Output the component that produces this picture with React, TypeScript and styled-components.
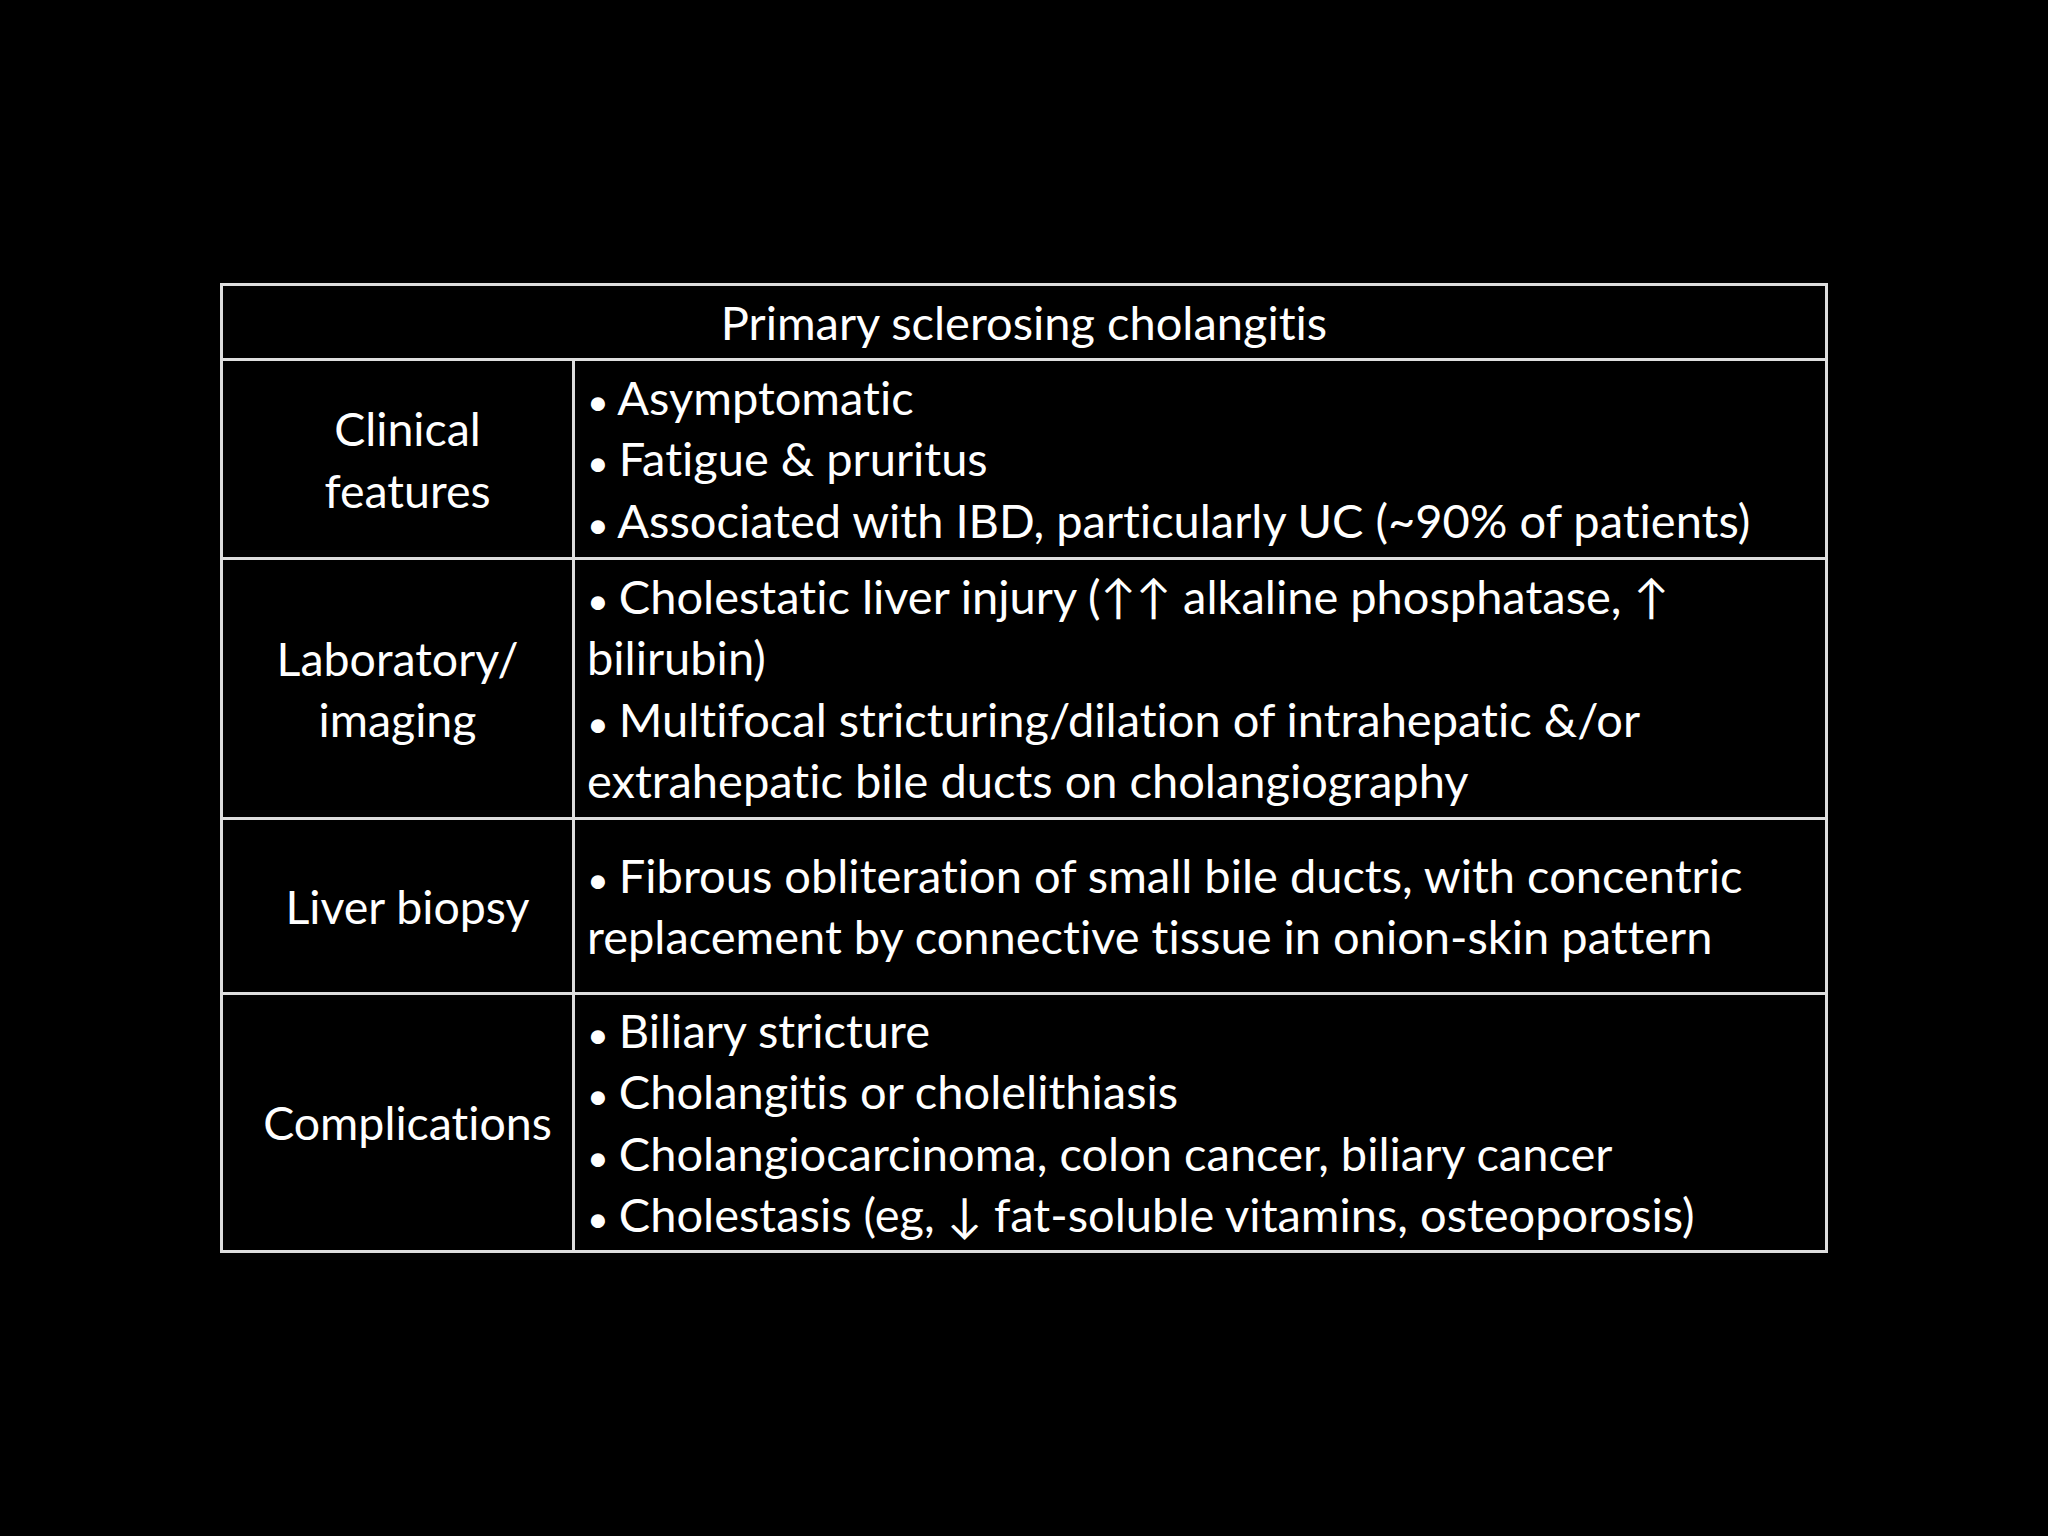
import React from 'react';
import styled, { createGlobalStyle } from 'styled-components';

const Global = createGlobalStyle`
  html, body { margin: 0; padding: 0; background: #000; }
  body {
    font-family: Lato, "Open Sans", sans-serif;
    color: #fff;
    font-variant-ligatures: none;
    font-feature-settings: "liga" 0, "clig" 0;
  }
`;

const Page = styled.div`
  width: 100vw;
  height: 100vh;
  display: grid;
  place-items: center;
  background: #000;
`;

const Table = styled.div`
  width: 1608px;
  display: grid;
  grid-template-columns: 349px 1250px;
  grid-template-rows: 72px 196px 257px 172px 255px;
  gap: 3px;
  padding: 3px;
  background: #dedede;
  box-sizing: border-box;
`;

const Header = styled.div`
  grid-column: 1 / 3;
  background: #000;
  display: flex;
  align-items: center;
  justify-content: center;
  font-size: 47px;
  line-height: 61px;
`;

const Label = styled.div<{ $shift?: number }>`
  background: #000;
  display: flex;
  flex-direction: column;
  align-items: center;
  justify-content: center;
  text-align: center;
  font-size: 46.5px;
  line-height: 61.4px;
  padding-left: ${p => (p.$shift ?? 0) * 2}px;
  padding-top: 1px;
`;

const Body = styled.div`
  background: #000;
  display: flex;
  flex-direction: column;
  justify-content: center;
  padding: 0 12px;
  font-size: 47px;
  line-height: 61.4px;
  white-space: nowrap;
`;

const Line = styled.div`
  height: 61.4px;
`;

const Bullet = styled.span`
  font-size: 0.8em;
  line-height: 0;
  margin-right: -2px;
`;

type Row = { label: string[]; shift?: number; lines: string[] };

const rows: Row[] = [
  {
    label: ['Clinical', 'features'],
    shift: 10,
    lines: [
      '• Asymptomatic',
      '• Fatigue & pruritus',
      '• Associated with IBD, particularly UC (~90% of patients)',
    ],
  },
  {
    label: ['Laboratory/', 'imaging'],
    lines: [
      '• Cholestatic liver injury (↑↑ alkaline phosphatase, ↑',
      'bilirubin)',
      '• Multifocal stricturing/dilation of intrahepatic &/or',
      'extrahepatic bile ducts on cholangiography',
    ],
  },
  {
    label: ['Liver biopsy'],
    shift: 10,
    lines: [
      '• Fibrous obliteration of small bile ducts, with concentric',
      'replacement by connective tissue in onion-skin pattern',
    ],
  },
  {
    label: ['Complications'],
    shift: 10,
    lines: [
      '• Biliary stricture',
      '• Cholangitis or cholelithiasis',
      '• Cholangiocarcinoma, colon cancer, biliary cancer',
      '• Cholestasis (eg, ↓ fat-soluble vitamins, osteoporosis)',
    ],
  },
];

const renderLine = (l: string) =>
  l.startsWith('• ') ? (
    <Line key={l}>
      <Bullet>•</Bullet> {l.slice(2)}
    </Line>
  ) : (
    <Line key={l}>{l}</Line>
  );

export default function App() {
  return (
    <>
      <Global />
      <Page>
        <Table>
          <Header>Primary sclerosing cholangitis</Header>
          {rows.map(r => (
            <React.Fragment key={r.label.join(' ')}>
              <Label $shift={r.shift}>
                {r.label.map(l => <Line key={l}>{l}</Line>)}
              </Label>
              <Body>{r.lines.map(renderLine)}</Body>
            </React.Fragment>
          ))}
        </Table>
      </Page>
    </>
  );
}
